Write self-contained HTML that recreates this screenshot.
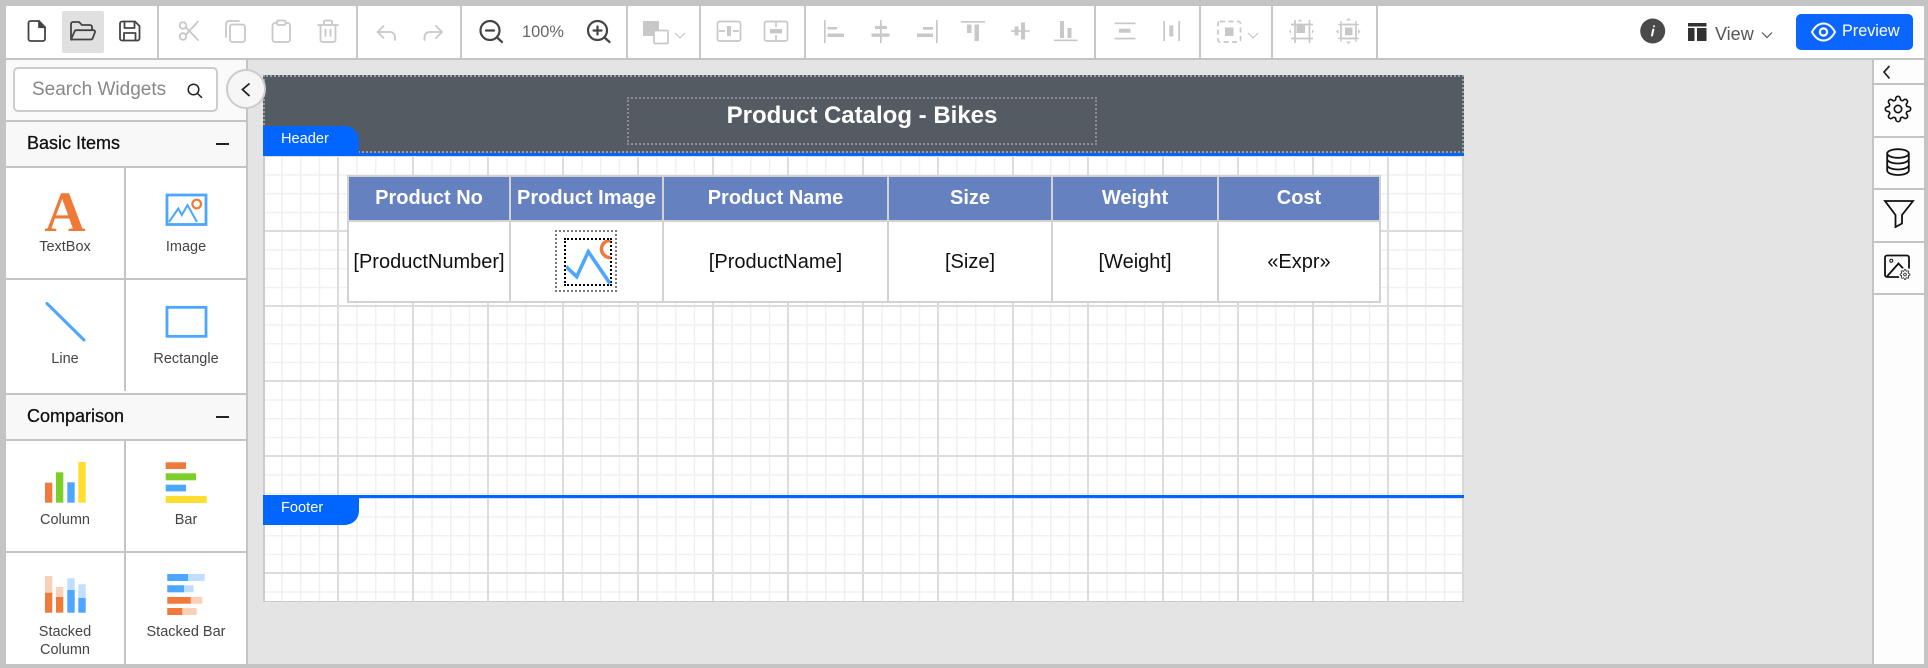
<!DOCTYPE html>
<html lang="en">
<head>
<meta charset="utf-8">
<title>Report Designer</title>
<style>
html,body{margin:0;padding:0;width:1928px;height:668px;overflow:hidden;background:#c4c4c4;font-family:"Liberation Sans",sans-serif}
.a{position:absolute}
.t{position:absolute;white-space:nowrap;text-align:center}
.b{position:absolute;background:#c8c8c8}
.lbl{position:absolute;width:118px;text-align:center;font-size:14.5px;line-height:18px;color:#444}
.hc,.bc{position:absolute;display:flex;align-items:center;justify-content:center;white-space:nowrap;font-size:20px}
.hc{top:177px;height:43px;background:#6581bf;color:#fff;font-weight:bold;padding-bottom:1px;box-sizing:border-box}
.bc{top:222px;height:79px;background:#fff;color:#111;padding-top:1px;box-sizing:border-box}
svg{position:absolute;left:0;top:0}
</style>
</head>
<body>
<!-- toolbar -->
<div class="a" style="left:6px;top:6px;width:1918px;height:52px;background:#fff"></div>
<div class="a" style="left:62px;top:11px;width:42px;height:42px;background:#e0e0e0;border-radius:2px"></div>
<div class="b" style="left:157px;top:6px;width:2px;height:52px"></div>
<div class="b" style="left:355.5px;top:6px;width:2px;height:52px"></div>
<div class="b" style="left:460px;top:6px;width:2px;height:52px"></div>
<div class="b" style="left:626px;top:6px;width:2px;height:52px"></div>
<div class="b" style="left:698.5px;top:6px;width:2px;height:52px"></div>
<div class="b" style="left:803.5px;top:6px;width:2px;height:52px"></div>
<div class="b" style="left:1094px;top:6px;width:2px;height:52px"></div>
<div class="b" style="left:1199px;top:6px;width:2px;height:52px"></div>
<div class="b" style="left:1271px;top:6px;width:2px;height:52px"></div>
<div class="b" style="left:1376px;top:6px;width:2px;height:52px"></div>
<div class="t" style="left:510px;width:66px;top:22px;line-height:20px;font-size:16.4px;color:#666">100%</div>
<div class="t" style="left:1715px;top:23px;line-height:22px;font-size:18px;color:#555">View</div>
<div class="a" style="left:1796px;top:14px;width:117px;height:36px;background:#0a66ff;border-radius:5px"></div>
<div class="t" style="left:1842px;top:21px;line-height:20px;font-size:16.2px;color:#fff">Preview</div>

<!-- canvas -->
<div class="a" style="left:248px;top:60px;width:1624px;height:604px;background:#e4e4e4"></div>

<!-- left panel -->
<div class="a" style="left:6px;top:60px;width:240px;height:604px;background:#c4c4c4"></div>
<div class="a" style="left:6px;top:60px;width:240px;height:60px;background:#fafafa"></div>
<div class="a" style="left:13px;top:67px;width:201px;height:41px;background:#fff;border:2px solid #ccc;border-radius:5px"></div>
<div class="t" style="left:32px;top:79px;line-height:22px;font-size:19px;color:#888">Search Widgets</div>
<div class="a" style="left:6px;top:122px;width:240px;height:44px;background:#f8f8f8"></div>
<div class="t" style="left:27px;top:132px;line-height:22px;font-size:18px;color:#111;-webkit-text-stroke:.3px #111">Basic Items</div>
<div class="a" style="left:216px;top:143px;width:13px;height:2px;background:#222"></div>
<div class="a" style="left:6px;top:168px;width:118px;height:110px;background:#fff"></div>
<div class="a" style="left:126px;top:168px;width:120px;height:110px;background:#fff"></div>
<div class="a" style="left:6px;top:280px;width:118px;height:113px;background:#fff"></div>
<div class="a" style="left:126px;top:280px;width:120px;height:113px;background:#fff"></div>
<div class="a" style="left:124px;top:391px;width:2px;height:2px;background:#fff"></div>
<div class="a" style="left:6px;top:395px;width:240px;height:44px;background:#f8f8f8"></div>
<div class="t" style="left:27px;top:405px;line-height:22px;font-size:18px;color:#111;-webkit-text-stroke:.3px #111">Comparison</div>
<div class="a" style="left:216px;top:416px;width:13px;height:2px;background:#222"></div>
<div class="a" style="left:6px;top:441px;width:118px;height:110px;background:#fff"></div>
<div class="a" style="left:126px;top:441px;width:120px;height:110px;background:#fff"></div>
<div class="a" style="left:6px;top:553px;width:118px;height:111px;background:#fff"></div>
<div class="a" style="left:126px;top:553px;width:120px;height:111px;background:#fff"></div>
<div class="t" style="left:44px;top:184px;font-family:'Liberation Serif',serif;font-weight:bold;font-size:57px;line-height:57px;color:#ef7a38;width:42px">A</div>
<div class="lbl" style="left:6px;top:238px">TextBox</div>
<div class="lbl" style="left:127px;top:238px">Image</div>
<div class="lbl" style="left:6px;top:350px">Line</div>
<div class="lbl" style="left:127px;top:350px">Rectangle</div>
<div class="lbl" style="left:6px;top:511px">Column</div>
<div class="lbl" style="left:127px;top:511px">Bar</div>
<div class="lbl" style="left:6px;top:623px">Stacked<br>Column</div>
<div class="lbl" style="left:127px;top:623px">Stacked Bar</div>

<!-- right panel -->
<div class="a" style="left:1874px;top:60px;width:50px;height:604px;background:#fdfdfd"></div>
<div class="a" style="left:1872px;top:60px;width:2px;height:604px;background:#c4c4c4"></div>
<div class="b" style="left:1874px;top:83px;width:50px;height:2px;background:#c4c4c4"></div>
<div class="b" style="left:1874px;top:136px;width:50px;height:2px;background:#c4c4c4"></div>
<div class="b" style="left:1874px;top:188px;width:50px;height:2px;background:#c4c4c4"></div>
<div class="b" style="left:1874px;top:241px;width:50px;height:2px;background:#c4c4c4"></div>
<div class="b" style="left:1874px;top:293px;width:50px;height:2px;background:#c4c4c4"></div>

<!-- report: body grid -->
<div class="a" style="left:263px;top:156px;width:1201px;height:339px;background-color:#fff;
background-image:linear-gradient(to right,transparent 73px,#dcdcdc 73px),linear-gradient(to bottom,transparent 73px,#dcdcdc 73px),linear-gradient(to right,transparent 17.25px,#f0f0f0 17.25px),linear-gradient(to bottom,transparent 17.25px,#f0f0f0 17.25px);
background-size:75px 75px,75px 75px,18.75px 18.75px,18.75px 18.75px;background-position:1px 0,0 1px,1px 0,0 1px"></div>
<!-- footer grid -->
<div class="a" style="left:263px;top:498px;width:1201px;height:104px;background-color:#fff;
background-image:linear-gradient(to right,transparent 73px,#dcdcdc 73px),linear-gradient(to bottom,transparent 73px,#dcdcdc 73px),linear-gradient(to right,transparent 17.25px,#f0f0f0 17.25px),linear-gradient(to bottom,transparent 17.25px,#f0f0f0 17.25px);
background-size:75px 75px,75px 75px,18.75px 18.75px,18.75px 18.75px;background-position:1px 0,0 1px,1px 0,0 1px"></div>
<div class="a" style="left:263px;top:156px;width:1.5px;height:446px;background:#ccc"></div>
<div class="a" style="left:1462px;top:156px;width:2px;height:446px;background:#d8d8d8"></div>
<div class="a" style="left:263px;top:600.5px;width:1201px;height:1.5px;background:#ccc"></div>
<!-- header band -->
<div class="a" style="left:263px;top:75px;width:1197px;height:74px;background:#545b63;border:2px dotted #9a9ea2"></div>
<div class="a" style="left:263px;top:153px;width:1201px;height:3px;background:#0066ff"></div>
<div class="a" style="left:263px;top:126px;width:96px;height:30px;background:#0066ff;border-top-right-radius:14px"></div>
<div class="t" style="left:281px;top:129px;line-height:20px;font-size:14.6px;color:#fff">Header</div>
<div class="a" style="left:627px;top:97px;width:466px;height:44px;border:2px dotted #8a8e92"></div>
<div class="t" style="left:627px;width:470px;top:101px;line-height:30px;font-size:24px;font-weight:bold;color:#fff">Product Catalog - Bikes</div>
<!-- footer line -->
<div class="a" style="left:263px;top:495px;width:1201px;height:3px;background:#0066ff"></div>
<div class="a" style="left:263px;top:495px;width:96px;height:30px;background:#0066ff;border-bottom-right-radius:14px"></div>
<div class="t" style="left:281px;top:498px;line-height:20px;font-size:14.6px;color:#fff">Footer</div>

<!-- table -->
<div class="a" style="left:347px;top:175px;width:1034px;height:128px;background:#d2d2d2"></div>
<div class="hc" style="left:349px;width:160px">Product No</div>
<div class="hc" style="left:511px;width:151px">Product Image</div>
<div class="hc" style="left:664px;width:223px">Product Name</div>
<div class="hc" style="left:889px;width:162px">Size</div>
<div class="hc" style="left:1053px;width:164px">Weight</div>
<div class="hc" style="left:1219px;width:160px">Cost</div>
<div class="bc" style="left:349px;width:160px">[ProductNumber]</div>
<div class="bc" style="left:511px;width:151px"></div>
<div class="bc" style="left:664px;width:223px">[ProductName]</div>
<div class="bc" style="left:889px;width:162px">[Size]</div>
<div class="bc" style="left:1053px;width:164px">[Weight]</div>
<div class="bc" style="left:1219px;width:160px">«Expr»</div>
<div class="a" style="left:555px;top:230px;width:58px;height:58px;border:2px dotted #777"></div>
<div class="a" style="left:564px;top:238px;width:44px;height:44px;border:2px dotted #000"></div>

<!-- collapse circle -->
<div class="a" style="left:226px;top:69px;width:36px;height:36px;border:2px solid #ccc;border-radius:50%;background:#f6f6f6"></div>

<svg width="1928" height="668" viewBox="0 0 1928 668" fill="none">
<defs>
<path id="gear" d="M19.4 15a1.65 1.65 0 0 0 .33 1.82l.06.06a2 2 0 0 1 0 2.83 2 2 0 0 1-2.83 0l-.06-.06a1.65 1.65 0 0 0-1.82-.33 1.65 1.65 0 0 0-1 1.51V21a2 2 0 0 1-2 2 2 2 0 0 1-2-2v-.09A1.65 1.65 0 0 0 9 19.4a1.65 1.65 0 0 0-1.82.33l-.06.06a2 2 0 0 1-2.83 0 2 2 0 0 1 0-2.83l.06-.06a1.65 1.65 0 0 0 .33-1.82 1.65 1.65 0 0 0-1.51-1H3a2 2 0 0 1-2-2 2 2 0 0 1 2-2h.09A1.65 1.65 0 0 0 4.6 9a1.65 1.65 0 0 0-.33-1.82l-.06-.06a2 2 0 0 1 0-2.83 2 2 0 0 1 2.83 0l.06.06a1.65 1.65 0 0 0 1.82.33H9a1.65 1.65 0 0 0 1-1.51V3a2 2 0 0 1 2-2 2 2 0 0 1 2 2v.09a1.65 1.65 0 0 0 1 1.51 1.65 1.65 0 0 0 1.82-.33l.06-.06a2 2 0 0 1 2.83 0 2 2 0 0 1 0 2.83l-.06.06a1.65 1.65 0 0 0-.33 1.82V9a1.65 1.65 0 0 0 1.51 1H21a2 2 0 0 1 2 2 2 2 0 0 1-2 2h-.09a1.65 1.65 0 0 0-1.51 1z"/>
</defs>
<!-- file actions -->
<g stroke="#444" stroke-width="1.8" stroke-linejoin="round" stroke-linecap="round">
<path d="M30.5 21h8.5l6 6.2v11.8a2 2 0 0 1-2 2H30.5a2 2 0 0 1-2-2V23a2 2 0 0 1 2-2z"/>
<path d="M39 21v6.2h6" fill="#444"/>
<path d="M71 38V24a2 2 0 0 1 2-2h6l3 3h8a2 2 0 0 1 2 2v3"/>
<path d="M71 39.5l3.6-8.2a2 2 0 0 1 1.8-1.1H93.6a1.5 1.5 0 0 1 1.4 2l-2.3 6a2 2 0 0 1-1.9 1.3H72.5a1.5 1.5 0 0 1-1.5 0z"/>
<path d="M122 21.5h13l4.5 4.5v12.5a2 2 0 0 1-2 2H122a2 2 0 0 1-2-2V23.5a2 2 0 0 1 2-2z"/>
<path d="M124.5 22v6h10v-6M124 40.5v-7.5h11.500v7.500"/>
</g>
<!-- disabled edit icons -->
<g stroke="#c8c8c8" stroke-width="1.8" stroke-linejoin="round" stroke-linecap="round">
<circle cx="183" cy="25.500" r="3.300"/><circle cx="183" cy="36.500" r="3.300"/>
<path d="M186 27.500L198 40M186 34.500L198 21.500"/>
<rect x="230" y="24.500" width="15" height="17.500" rx="2.500"/>
<path d="M226 37V24a3 3 0 0 1 3-3h10"/>
<rect x="272.500" y="23" width="17.500" height="19" rx="2.500"/>
<rect x="277" y="20.500" width="8.500" height="4.500" rx="1.500" fill="#fff"/>
<path d="M318 25h20M324 25v-3a1.500 1.500 0 0 1 1.500-1.500h5a1.500 1.500 0 0 1 1.500 1.500v3M320.500 25v15a2 2 0 0 0 2 2h11a2 2 0 0 0 2-2V25M325.500 29.500V36M330.500 29.500V36"/>
<path d="M383.500 26l-6 6 6 6M377.500 32H390a5 5 0 0 1 5 5v3"/>
<path d="M436 26l6 6-6 6M442 32H429.500a5 5 0 0 0-5 5v3"/>
</g>
<!-- zoom -->
<g stroke="#444" stroke-width="2.200" stroke-linecap="round">
<circle cx="490" cy="30.500" r="9.500"/><path d="M497 37.500L502 42M486 30.500h8"/>
<circle cx="597.500" cy="30.500" r="9.500"/><path d="M604.500 37.500L609.500 42M593.500 30.500h8M597.500 26.500v8"/>
</g>
<!-- disabled layout icons -->
<g fill="#c8c8c8">
<rect x="643" y="21" width="16" height="15"/>
<rect x="727" y="26" width="4" height="10"/>
<rect x="770" y="29" width="12" height="4.500"/>
<rect x="824" y="20" width="1.700" height="23"/><rect x="827.500" y="27" width="9.500" height="2.500"/><rect x="827.500" y="33.500" width="16.500" height="3.500"/>
<rect x="880" y="20" width="1.700" height="23"/><rect x="875" y="26" width="12" height="3"/><rect x="871.500" y="33.500" width="18" height="3.300"/>
<rect x="936" y="20" width="1.700" height="23"/><rect x="923" y="27" width="10" height="2.800"/><rect x="917" y="33.500" width="16" height="3.500"/>
<rect x="961" y="21" width="24" height="1.700"/><rect x="967" y="24.500" width="4.500" height="8.500"/><rect x="974.500" y="24.500" width="4.500" height="16.500"/>
<rect x="1011" y="30.200" width="18.500" height="1.700"/><rect x="1014.500" y="26.500" width="4" height="9"/><rect x="1021" y="22.500" width="4" height="17"/>
<rect x="1054" y="39.500" width="23.500" height="1.700"/><rect x="1060" y="21" width="4" height="17"/><rect x="1067.500" y="28" width="4" height="10"/>
<rect x="1114.500" y="22.500" width="21" height="1.700"/><rect x="1114.500" y="37.700" width="21" height="1.700"/><rect x="1119" y="28.700" width="11.500" height="4"/>
<rect x="1163.300" y="21" width="1.700" height="20"/><rect x="1178.300" y="21" width="1.700" height="20"/><rect x="1169.300" y="25.500" width="4" height="11"/>
<rect x="1225" y="27.500" width="8.500" height="8.500"/>
<rect x="1296.500" y="24.500" width="8.500" height="8.500"/>
<rect x="1345" y="27.500" width="7.500" height="7.800"/>
<path d="M1291 29.500l-2 2 2 2zM1312 29.500l2 2-2 2zM1300 19l2 2.500h-4zM1346 20.500l2.500-2.500 2.500 2.500zM1346 41.500l2.500 2.500 2.500-2.500zM1338.500 29l-2.500 2.500 2.500 2.500zM1358 29l2.500 2.500-2.500 2.500z"/>
</g>
<g stroke="#c8c8c8" stroke-width="1.700">
<rect x="654" y="30.500" width="14" height="13" rx="1" fill="#fff"/>
<rect x="717.500" y="21.500" width="23" height="19.500" rx="2"/>
<path d="M719 31h6M733 31h6"/>
<rect x="764.500" y="21.500" width="23" height="19.500" rx="2"/>
<path d="M776 22v5M776 35v5"/>
<rect x="1218" y="21.500" width="22.500" height="20.500" rx="2" stroke-dasharray="5 3.500"/>
<path d="M1295 20v23M1309.500 20v23M1291 24.500h22M1291 38.500h22"/>
<path d="M1341 24.500h15v14h-15z"/>
<path d="M1338 24.500h21M1338 38.500h21M1341 21v21M1356 21v21" stroke-width="1.300"/>
</g>
<g stroke="#c4c4c4" stroke-width="1.100">
<path d="M675 33l5 5 5-5M1248 33l5 5 5-5"/>
</g>
<!-- right of toolbar -->
<circle cx="1652.700" cy="31" r="12.500" fill="#4a4a4a"/>
<path d="M1654 26.200v.1M1653.300 29.500l-1.300 6" stroke="#fff" stroke-width="2" stroke-linecap="round"/>
<rect x="1688" y="23" width="18.500" height="3.500" fill="#333"/>
<rect x="1688" y="28" width="6.500" height="13" fill="#333"/>
<rect x="1697" y="28" width="9.500" height="13" fill="#333"/>
<path d="M1762 32.500l5 5 5-5" stroke="#555" stroke-width="1.200"/>
<path d="M1812 32c3-5.500 7-8.500 11.500-8.500s8.500 3 11.500 8.500c-3 5.500-7 8.500-11.500 8.500s-8.500-3-11.500-8.500z" stroke="#fff" stroke-width="2"/>
<circle cx="1823.500" cy="32" r="3.600" stroke="#fff" stroke-width="2.200"/>
<!-- search + collapse -->
<circle cx="193.500" cy="89.500" r="5.300" stroke="#222" stroke-width="1.500"/>
<path d="M197.500 93.500L202 97.800" stroke="#222" stroke-width="1.500"/>
<path d="M249.500 83.500L242.500 89.500l7 6.500" stroke="#222" stroke-width="1.800"/>
<!-- widgets -->
<rect x="167" y="195" width="39" height="29.500" stroke="#4da6ff" stroke-width="2.800"/>
<path d="M169 222l9.300-13.500 3.500 6.500 5.700-10L197 222" stroke="#4da6ff" stroke-width="2"/>
<circle cx="196.700" cy="204" r="4.300" stroke="#ef7a38" stroke-width="2.200"/>
<path d="M47 303.500L84 340" stroke="#4da6ff" stroke-width="3" stroke-linecap="round"/>
<rect x="167" y="307.300" width="39" height="29" stroke="#4da6ff" stroke-width="2.800"/>
<g>
<rect x="45" y="482.700" width="7.300" height="20" fill="#ef7a3c"/>
<rect x="56" y="472.300" width="7.300" height="30.400" fill="#7ccf2a"/>
<rect x="67.300" y="482.300" width="7.400" height="20.400" fill="#4da6ff"/>
<rect x="78.300" y="462" width="7.400" height="40.700" fill="#ffdd2e"/>
<rect x="165.700" y="462.300" width="20.300" height="6.700" fill="#ef7a3c"/>
<rect x="165.700" y="473.300" width="30.300" height="7" fill="#7ccf2a"/>
<rect x="165.700" y="484.700" width="20.300" height="6.700" fill="#4da6ff"/>
<rect x="165.700" y="496" width="41" height="7" fill="#ffdd2e"/>
<rect x="45" y="576" width="7.300" height="16.700" fill="#fbd0b8"/><rect x="45" y="592.700" width="7.300" height="20" fill="#ef7a3c"/>
<rect x="56" y="587" width="7.300" height="10" fill="#fbd0b8"/><rect x="56" y="597" width="7.300" height="15.700" fill="#ef7a3c"/>
<rect x="67.300" y="578.300" width="7.400" height="11.700" fill="#c0dfff"/><rect x="67.300" y="590" width="7.400" height="22.700" fill="#4da6ff"/>
<rect x="78.300" y="584.300" width="7.400" height="13.700" fill="#c0dfff"/><rect x="78.300" y="598" width="7.400" height="14.700" fill="#4da6ff"/>
<rect x="167.300" y="574" width="37.400" height="7" fill="#c0dfff"/><rect x="167.300" y="574" width="20.700" height="7" fill="#4da6ff"/>
<rect x="167.300" y="585.300" width="26.400" height="7" fill="#c0dfff"/><rect x="167.300" y="585.300" width="16.700" height="7" fill="#4da6ff"/>
<rect x="167.300" y="597" width="35" height="6.700" fill="#fbd0b8"/><rect x="167.300" y="597" width="23.400" height="6.700" fill="#ef7a3c"/>
<rect x="167.300" y="608" width="29.400" height="7" fill="#fbd0b8"/><rect x="167.300" y="608" width="15" height="7" fill="#ef7a3c"/>
</g>
<!-- image item in table -->
<clipPath id="cp"><rect x="566" y="240" width="44.500" height="45"/></clipPath>
<g clip-path="url(#cp)">
<circle cx="610" cy="249" r="8.500" stroke="#ef7a38" stroke-width="3.500"/>
<path d="M566 266.500L576.700 276.700 588.300 251.700 610 283.500" stroke="#4da6ff" stroke-width="3.600"/>
</g>
<!-- right panel icons -->
<path d="M1889.500 66l-5.500 6 5.500 6.500" stroke="#222" stroke-width="1.700"/>
<g transform="translate(1884.200 95.200) scale(1.150)" stroke="#111" stroke-width="1.400"><use href="#gear"/><circle cx="12" cy="12" r="3.200"/></g>
<g stroke="#111" stroke-width="1.800">
<ellipse cx="1898" cy="153.500" rx="10.800" ry="4.300"/>
<path d="M1887.200 153.500v17c0 2.500 4.800 4.500 10.800 4.500s10.800-2 10.800-4.500v-17M1887.200 159c0 2.500 4.800 4.500 10.800 4.500s10.800-2 10.800-4.500M1887.200 165c0 2.500 4.800 4.500 10.800 4.500s10.800-2 10.800-4.500"/>
<path d="M1885 201h28l-11 14v8.500l-6.500 3.500v-12z" stroke-linejoin="miter"/>
<path d="M1890 255.500h17a2 2 0 0 1 2 2v11M1901 277h-14a2 2 0 0 1-2-2V257.500a2 2 0 0 1 2-2h4"/>
<path d="M1886.500 277l12-13.500 6 6.500"/>
<circle cx="1891.300" cy="260.700" r="1.500" stroke-width="1"/>
</g>
<circle cx="1905" cy="274.500" r="6.500" fill="#fdfdfd"/>
<g transform="translate(1899.600 269.100) scale(.45)" stroke="#222" stroke-width="1.800"><use href="#gear"/><circle cx="12" cy="12" r="3"/></g>
</svg>
</body>
</html>
